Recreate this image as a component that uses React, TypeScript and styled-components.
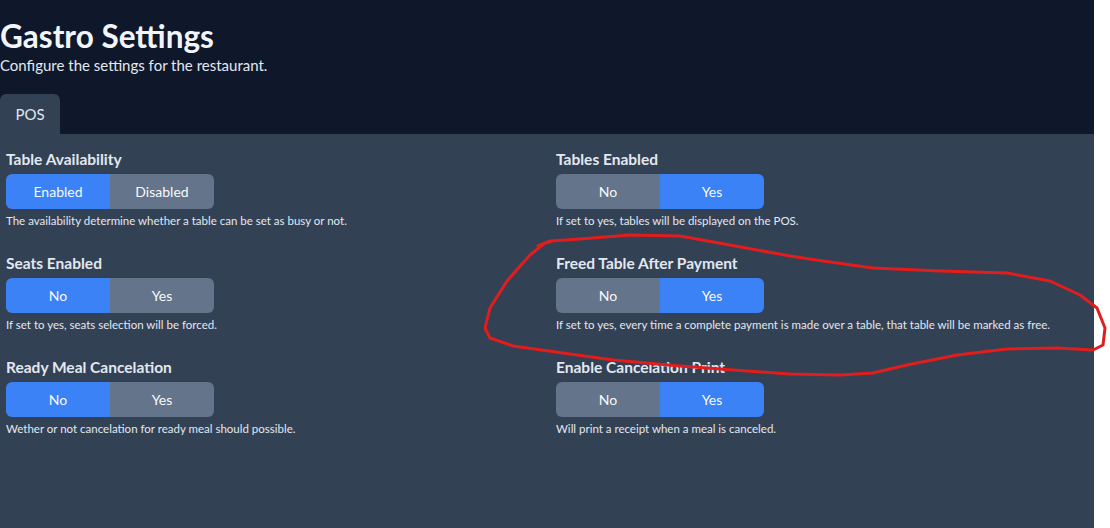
import styled, { createGlobalStyle } from 'styled-components'

const GlobalStyle = createGlobalStyle`
  body {
    margin: 0;
    background: #ffffff;
    font-family: 'Lato', 'Open Sans', sans-serif;
  }
`

const Wrapper = styled.div`
  position: relative;
  width: 1110px;
  height: 528px;
  overflow: hidden;
`

const Page = styled.div`
  width: 1094px;
  height: 528px;
  background-color: #0f172a;
  display: flex;
  flex-direction: column;
`

const Header = styled.header`
  padding-top: 18px;
  color: #e2e8f0;

  h1 {
    margin: 0;
    font-size: 31.5px;
    line-height: 37px;
    font-weight: 700;
    color: #f1f5f9;
  }

  p {
    margin: 0;
    font-size: 15px;
    line-height: 20px;
  }
`

const Tabs = styled.div`
  display: flex;
  margin-top: 19px;
`

const Tab = styled.div<{ $active?: boolean }>`
  width: 60px;
  height: 40px;
  display: flex;
  align-items: center;
  justify-content: center;
  border-radius: 6px 6px 0 0;
  background-color: ${(p) => (p.$active ? '#334155' : 'transparent')};
  color: #e2e8f0;
  font-size: 15px;
`

const Panel = styled.section`
  flex: 1;
  background-color: #334155;
  padding: 13px 0 0 6px;
  display: grid;
  grid-template-columns: 538px 1fr;
  grid-auto-rows: 82px;
  column-gap: 12px;
  row-gap: 22px;
  align-content: start;
`

const Setting = styled.div`
  display: flex;
  flex-direction: column;
`

const Label = styled.div`
  font-size: 15.5px;
  line-height: 24px;
  font-weight: 700;
  color: #e2e8f0;
`

const Toggle = styled.div`
  display: flex;
  width: 208px;
  height: 36px;
  margin-top: 3px;
  border-radius: 6px;
  overflow: hidden;
`

const Option = styled.div<{ $active?: boolean }>`
  flex: 1;
  display: flex;
  align-items: center;
  justify-content: center;
  font-size: 14px;
  color: #f8fafc;
  background-color: ${(p) => (p.$active ? '#3b82f6' : '#64748b')};
`

const Hint = styled.div`
  margin-top: 4px;
  font-size: 11.5px;
  line-height: 16px;
  color: #e2e8f0;
`

const Annotation = styled.svg`
  position: absolute;
  left: 0;
  top: 0;
  pointer-events: none;
`

type Item = {
  label: string
  options: [string, string]
  active: number
  hint: string
}

const settings: Item[] = [
  {
    label: 'Table Availability',
    options: ['Enabled', 'Disabled'],
    active: 0,
    hint: 'The availability determine whether a table can be set as busy or not.',
  },
  {
    label: 'Tables Enabled',
    options: ['No', 'Yes'],
    active: 1,
    hint: 'If set to yes, tables will be displayed on the POS.',
  },
  {
    label: 'Seats Enabled',
    options: ['No', 'Yes'],
    active: 0,
    hint: 'If set to yes, seats selection will be forced.',
  },
  {
    label: 'Freed Table After Payment',
    options: ['No', 'Yes'],
    active: 1,
    hint: 'If set to yes, every time a complete payment is made over a table, that table will be marked as free.',
  },
  {
    label: 'Ready Meal Cancelation',
    options: ['No', 'Yes'],
    active: 0,
    hint: 'Wether or not cancelation for ready meal should possible.',
  },
  {
    label: 'Enable Cancelation Print',
    options: ['No', 'Yes'],
    active: 1,
    hint: 'Will print a receipt when a meal is canceled.',
  },
]

const scribble = [
  [538, 246], [550, 241], [580, 239], [630, 235], [680, 236], [730, 245],
  [790, 256], [823, 261], [873, 268], [940, 271], [1007, 273], [1050, 281],
  [1080, 295], [1097, 308], [1105, 328], [1103, 345], [1093, 350], [1057, 348],
  [1007, 349], [957, 355], [907, 365], [873, 373], [840, 375], [790, 374],
  [747, 371], [680, 366], [613, 360], [563, 353], [513, 346], [490, 338],
  [485, 328], [490, 308], [507, 281], [530, 255], [545, 243], [553, 241],
]

const App = () => {
  return (
    <Wrapper>
      <GlobalStyle />
      <Page>
        <Header>
          <h1>Gastro Settings</h1>
          <p>Configure the settings for the restaurant.</p>
        </Header>
        <Tabs>
          <Tab $active>POS</Tab>
        </Tabs>
        <Panel>
          {settings.map((s) => (
            <Setting key={s.label}>
              <Label>{s.label}</Label>
              <Toggle>
                {s.options.map((o, i) => (
                  <Option key={o} $active={i === s.active}>
                    {o}
                  </Option>
                ))}
              </Toggle>
              <Hint>{s.hint}</Hint>
            </Setting>
          ))}
        </Panel>
      </Page>
      <Annotation width="1110" height="528" viewBox="0 0 1110 528">
        <polyline
          points={scribble.map((p) => p.join(',')).join(' ')}
          fill="none"
          stroke="#e11d1d"
          strokeWidth="3"
          strokeLinejoin="round"
          strokeLinecap="round"
        />
      </Annotation>
    </Wrapper>
  )
}

export default App
